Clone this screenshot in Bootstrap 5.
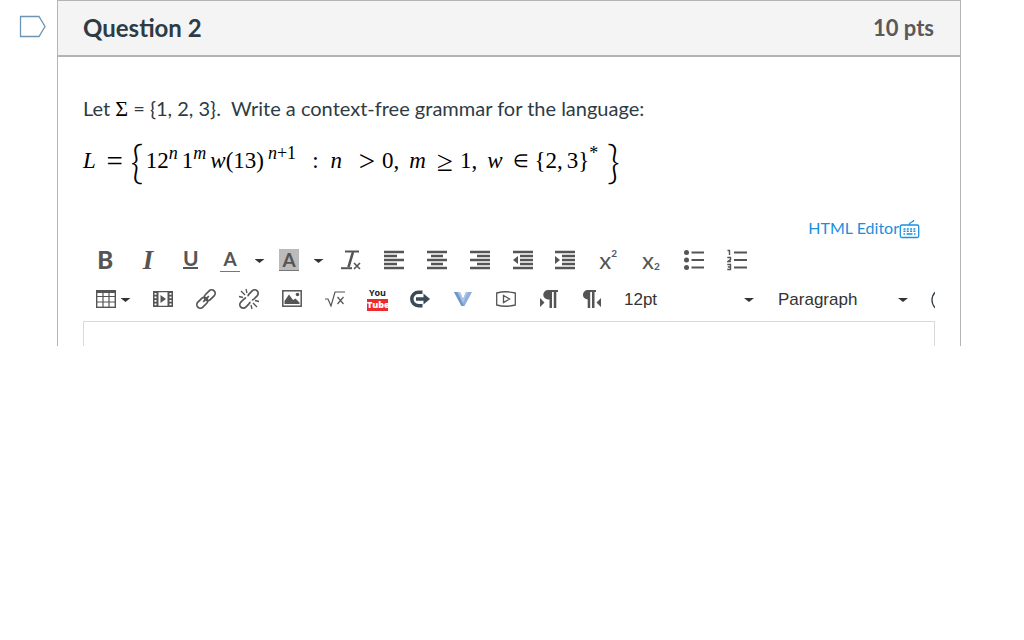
<!DOCTYPE html>
<html lang="en">
<head>
<meta charset="utf-8">
<meta name="viewport" content="width=device-width, initial-scale=1">
<title>Question 2</title>
<link href="https://cdn.jsdelivr.net/npm/bootstrap@5.3.0/dist/css/bootstrap.min.css" rel="stylesheet">
<style>
  body { font-family: Lato, sans-serif; color: #2d3b45; background: #fff; }
  .question-row { padding-right: 63px; }
  .flag-col { width: 57px; padding: 15px 0 0 19px; }
  .question { border: 1px solid #b4b4b4; border-bottom: 0; min-width: 0; }
  .question-head { background: #f4f4f4; border-bottom: 2px solid #b4b4b4; height: 56px; padding: 0 26px 0 25px; }
  .question-head h1 { font-size: 24px; line-height: 28px; font-weight: 700; }
  .points { font-size: 22px; line-height: 28px; font-weight: 700; color: #595959; }
  .question-body { padding: 35px 25px 0; }
  .prompt { font-size: 20px; line-height: 32px; }
  .sigma { font: 22px/20px "Liberation Serif", serif; color: #000; }
  .formula { font: 23px/44px "Liberation Serif", serif; color: #000; height: 44px; margin-top: 15px; white-space: nowrap; }
  .formula .pow { font-size: 18px; line-height: 28px; align-self: flex-start; }
  .formula .tall { font: 300 45px/36px Lato, sans-serif; width: 18px; text-align: center; }
  .formula .rel { font-size: 29px; width: 18px; text-align: center; }
  .formula .rel-in { font-size: 18px; }
  .sp-4 { margin-left: 4px; } .sp-6 { margin-left: 6px; } .sp-10 { margin-left: 10px; } .sp-12 { margin-left: 12px; } .sp-16 { margin-left: 16px; }
  .switch-line { margin-top: 32px; padding-right: 15px; height: 25px; }
  .switch-line a { font-size: 16px; line-height: 24px; color: #1c8fdd; }
  .switch-line svg { margin-top: 2px; }
  .tools { height: 39px; overflow: hidden; padding-left: 1px; }
  .tool-set { flex: none; }
  .tool { border: 0; background: none; padding: 0; height: 39px; color: #555; display: flex; align-items: center; justify-content: center; line-height: 24px; }
  .tool svg, .flag-col svg, .switch-line svg { display: block; }
  .w-43 { width: 43px; } .w-tail { width: 23px; } .w-ink { width: 36px; } .w-grid { width: 58px; gap: 5px; }
  .set-three { width: 128px; } .set-ten { width: 428px; } .set-eleven { width: 471px; }
  .tool-set > .tool { flex: 1 1 0; }
  .caret { width: 10px; height: 4px; background: #333; clip-path: polygon(0 0, 100% 0, 50% 100%); margin-top: 3px; }
  .t-bold { font-size: 24px; font-weight: 900; }
  .t-ital { font: italic 700 27px/24px "Liberation Serif", serif; }
  .t-under { font-size: 21px; font-weight: 700; line-height: 15px; border-bottom: 2px solid #555; padding-bottom: 2px; }
  .ink { width: 20px; height: 24px; border-bottom: 1px solid #777; font-size: 19px; font-weight: 700; line-height: 22px; }
  .ink-fill { background: #bbb; height: 22px; }
  .t-x { font: 24px/24px Lato, sans-serif; }
  .t-digit { font: 700 10px/10px Lato, sans-serif; }
  .yt { font: 700 9px/12px "Open Sans", sans-serif; color: #222; width: 21px; }
  .yt b { background: #f02a2a; color: #fff; display: block; }
  .picker { appearance: none; border: 0; width: 154px; height: 39px; flex: none; padding: 2px 30px 0 11px; font: 17px/24px "Liberation Sans", sans-serif; color: #333;
    background: url("data:image/svg+xml,%3Csvg xmlns='http://www.w3.org/2000/svg' width='10' height='4'%3E%3Cpath d='M0 0h10L5 4z' fill='%23333'/%3E%3C/svg%3E") no-repeat right 13px top 19px; }
  .editor { display: block; width: 100%; height: 25px; border: 1px solid #d9d9d9; border-bottom: 0; resize: none; margin-top: 3px; outline: 0; overflow: hidden; }
</style>
</head>
<body>
<main class="question-row d-flex">
  <div class="flag-col flex-shrink-0">
    <button type="button" class="border-0 bg-transparent p-0" aria-label="Flag question">
      <svg width="28" height="24" viewBox="0 0 28 24" fill="#fff" stroke="#6d95b3" stroke-width="1.300"><path d="M1.500 1.500H20L26 11.500L20 21.500H1.500Z"/></svg>
    </button>
  </div>
  <section class="question flex-grow-1">
    <header class="question-head d-flex justify-content-between align-items-center">
      <h1 class="m-0">Question 2</h1>
      <span class="points">10 pts</span>
    </header>
    <div class="question-body">
      <p class="prompt m-0">Let <span class="sigma">Σ</span> = {1, 2, 3}.&nbsp; Write a context-free grammar for the language:</p>
      <div class="formula d-flex align-items-center">
        <i>L</i><span class="rel sp-10">=</span><span class="tall sp-4">{</span><span>12</span><i class="pow">n</i><span class="sp-4">1</span><i class="pow">m</i><i class="sp-4">w</i><span>(13)</span><span class="pow sp-4"><i>n</i>+1</span><span class="sp-16">:</span><i class="sp-12">n</i><span class="rel sp-16">&gt;</span><span class="sp-6">0,</span><i class="sp-10">m</i><span class="rel sp-10">≥</span><span class="sp-6">1,</span><i class="sp-10">w</i><span class="rel rel-in sp-10">∈</span><span class="sp-4">{2,</span><span class="sp-4">3}</span><span class="pow">*</span><span class="tall sp-6">}</span>
      </div>
      <div class="switch-line d-flex justify-content-end align-items-center">
        <a href="#" class="text-decoration-none">HTML Editor</a>
        <svg width="21" height="20" viewBox="0 0 20 20" fill="none" stroke="#1c8fdd" stroke-width="1.300"><rect x=".8" y="6" width="18.400" height="12.500" rx="1.500"/><path d="M10 6V4.500L14 2V1"/><path d="M4 10h12M4 12.300h12" stroke-width="1.600" stroke-dasharray="2 1.300"/><path d="M4 15h1.500M7 15h6M14.500 15H16" stroke-width="1.600"/></svg>
      </div>
      <div class="tools d-flex" role="toolbar" aria-label="Text style">
        <div class="tool-set set-three d-flex">
          <button type="button" class="tool t-bold" aria-label="Bold">B</button>
          <button type="button" class="tool t-ital" aria-label="Italic">I</button>
          <button type="button" class="tool" aria-label="Underline"><span class="t-under">U</span></button>
        </div>
        <button type="button" class="tool w-ink" aria-label="Text color"><span class="ink">A</span></button>
        <button type="button" class="tool w-tail" aria-label="Choose text color"><span class="caret"></span></button>
        <button type="button" class="tool w-ink" aria-label="Background color"><span class="ink ink-fill">A</span></button>
        <button type="button" class="tool w-tail" aria-label="Choose background color"><span class="caret"></span></button>
        <div class="tool-set set-ten d-flex">
          <button type="button" class="tool" aria-label="Clear formatting"><svg width="20" height="20" viewBox="0 0 20 20" stroke="currentColor" fill="none"><path d="M4 1.500h14" stroke-width="2"/><path d="M12 2L7.500 17" stroke-width="2.600"/><path d="M0 18.200h11" stroke-width="2"/><path d="M13 13l6 6M19 13l-6 6" stroke-width="1.600"/></svg></button>
          <button type="button" class="tool" aria-label="Align left"><svg width="20" height="20" viewBox="0 0 20 20" stroke="currentColor" stroke-width="2.300"><path d="M0 2h20M0 6h13M0 10h20M0 14h13M0 18h20"/></svg></button>
          <button type="button" class="tool" aria-label="Align center"><svg width="20" height="20" viewBox="0 0 20 20" stroke="currentColor" stroke-width="2.300"><path d="M0 2h20M4 6h12M0 10h20M4 14h12M0 18h20"/></svg></button>
          <button type="button" class="tool" aria-label="Align right"><svg width="20" height="20" viewBox="0 0 20 20" stroke="currentColor" stroke-width="2.300"><path d="M0 2h20M7 6h13M0 10h20M7 14h13M0 18h20"/></svg></button>
          <button type="button" class="tool" aria-label="Decrease indent"><svg width="20" height="20" viewBox="0 0 20 20" stroke="currentColor" stroke-width="2.300"><path d="M0 2h20M7 6h13M7 10h13M7 14h13M0 18h20"/><path d="M0 10l5-4v8z" fill="currentColor" stroke="none"/></svg></button>
          <button type="button" class="tool" aria-label="Increase indent"><svg width="20" height="20" viewBox="0 0 20 20" stroke="currentColor" stroke-width="2.300"><path d="M0 2h20M7 6h13M7 10h13M7 14h13M0 18h20"/><path d="M5 10L0 6v8z" fill="currentColor" stroke="none"/></svg></button>
          <button type="button" class="tool" aria-label="Superscript"><span class="t-x">x</span><span class="t-digit align-self-start mt-2">2</span></button>
          <button type="button" class="tool" aria-label="Subscript"><span class="t-x">x</span><span class="t-digit align-self-end mb-2">2</span></button>
          <button type="button" class="tool" aria-label="Bulleted list"><svg width="20" height="20" viewBox="0 0 20 20" stroke="currentColor" stroke-width="2"><path d="M7.500 2.500H20M7.500 10H20M7.500 17.500H20"/><g fill="currentColor" stroke="none"><circle cx="2.500" cy="2.500" r="2.500"/><circle cx="2.500" cy="10" r="2.500"/><circle cx="2.500" cy="17.500" r="2.500"/></g></svg></button>
          <button type="button" class="tool" aria-label="Numbered list"><svg width="20" height="22" viewBox="0 0 20 22" stroke="currentColor" stroke-width="2"><path d="M7 3.500H20M7 11H20M7 18.500H20"/><g fill="none" stroke-width="1.400"><path d="M.5 1.500H2.500V6M.3 8.500H3.500V10.700L.8 12.500H4M.3 15.500H3.500V20.500H.3M.8 18h2.700"/></g></svg></button>
        </div>
      </div>
      <div class="tools d-flex" role="toolbar" aria-label="Insert">
        <button type="button" class="tool w-grid flex-shrink-0" aria-label="Table"><svg width="20" height="18" viewBox="0 0 20 18" fill="none" stroke="currentColor"><rect x=".7" y=".7" width="18.600" height="16.600" stroke-width="1.400"/><path d="M0 2h20" stroke-width="2"/><path d="M1 6.500h18M1 12h18M7 1v16M13 1v16" stroke-width="1.200"/></svg><span class="caret"></span></button>
        <div class="tool-set set-eleven d-flex">
          <button type="button" class="tool" aria-label="Media"><svg width="20" height="16" viewBox="0 0 20 16" fill="currentColor"><path fill-rule="evenodd" d="M0 0h20v16H0zM5.500 1.300v13.400h9V1.300zM1.500 2v1.800h2V2zM1.500 5.500v1.800h2V5.500zM1.500 9v1.800h2V9zM1.500 12.400v1.800h2v-1.800zM16.500 2v1.800h2V2zM16.500 5.500v1.800h2V5.500zM16.500 9v1.800h2V9zM16.500 12.400v1.800h2v-1.800z"/><path d="M7.500 4l5.500 4-5.500 4z"/></svg></button>
          <button type="button" class="tool" aria-label="Link"><svg width="20" height="20" viewBox="0 0 20 20" fill="none" stroke="currentColor" stroke-width="1.700"><g transform="rotate(-45 10 10)"><rect x="-1.500" y="6.500" width="12.500" height="7" rx="3.500"/><rect x="9" y="6.500" width="12.500" height="7" rx="3.500"/><path d="M6 10h8"/></g></svg></button>
          <button type="button" class="tool" aria-label="Remove link"><svg width="22" height="22" viewBox="0 0 22 22" fill="none" stroke="currentColor" stroke-width="1.700"><g transform="rotate(-45 11 11)"><path d="M9.500 8.500Q9 7.500 7.500 7.500H3A3.500 3.500 0 0 0 3 14.500H7.500Q9 14.500 9.500 13.500M12.500 8.500Q13 7.500 14.500 7.500H19A3.500 3.500 0 0 1 19 14.500H14.500Q13 14.500 12.500 13.500"/></g><path d="M3 3l4 4M8 1l1 4M1 8.500l4 1M15 15l4 4M13 17l1 4M17 12.500l4 1" stroke-width="1.300"/></svg></button>
          <button type="button" class="tool" aria-label="Image"><svg width="20" height="17" viewBox="0 0 20 17" fill="none" stroke="currentColor" stroke-width="1.500"><rect x=".8" y=".8" width="18.400" height="15.400"/><path d="M2.500 14V11L7 4.500L11 10L13.500 8.500L17.500 12.500V14Z" fill="currentColor" stroke="none"/><circle cx="15.500" cy="4.500" r="1.800" fill="currentColor" stroke="none"/></svg></button>
          <button type="button" class="tool" aria-label="Math equation"><svg width="20" height="16" viewBox="0 0 20 16" fill="none" stroke="currentColor" stroke-width="1.200"><path d="M0 8h3L6 15L10 1H20M12.500 6l6 7M18.500 6l-6 7"/></svg></button>
          <button type="button" class="tool" aria-label="YouTube"><span class="yt">You<b>Tube</b></span></button>
          <button type="button" class="tool" aria-label="External tool"><svg width="20" height="18" viewBox="0 0 20 18" fill="none" stroke="#394b58"><path d="M12.500 2.300H8.500A6.500 6.500 0 0 0 8.500 15.700H12.500" stroke-width="3.500"/><path d="M6 9H15" stroke-width="3.500"/><path d="M13.500 3.500L20 9L13.500 14.500Z" fill="#394b58" stroke="none"/></svg></button>
          <button type="button" class="tool" aria-label="Vericite"><svg width="18" height="16" viewBox="0 0 18 16"><path d="M0 1H6L9 8L12 1H18L10.500 15H7.500Z" fill="#8fb0dc"/><path d="M0 1H3L10 15H7.500Z" fill="#7096c8"/><path d="M4 1h2l3 7 3-7h2L9 12z" fill="#a9c5e8"/></svg></button>
          <button type="button" class="tool" aria-label="Video"><svg width="20" height="16" viewBox="0 0 20 16" fill="none" stroke="currentColor" stroke-width="1.300"><path d="M.7 2Q10-.5 19.300 2V14Q10 16.500 .7 14ZM7.500 4.500L13.500 8L7.500 11.500Z"/></svg></button>
          <button type="button" class="tool" aria-label="Left to right"><svg width="18" height="18" viewBox="0 0 18 18" fill="currentColor"><path d="M8 0H18V2H16.300V18H13.800V2H12V18H9.500V9.500H8A4.700 4.700 0 0 1 8 0ZM0 8L4.500 12.500L0 17Z"/></svg></button>
          <button type="button" class="tool" aria-label="Right to left"><svg width="18" height="18" viewBox="0 0 18 18" fill="currentColor"><path d="M4.700 0H13V2H11.500V18H9V2H7.200V18H4.700V9.500A4.700 4.700 0 0 1 4.700 0ZM18 8L13.500 12.500L18 17Z"/></svg></button>
        </div>
        <select class="picker" aria-label="Font size"><option>12pt</option></select>
        <select class="picker" aria-label="Block format"><option>Paragraph</option></select>
        <button type="button" class="tool w-43 flex-shrink-0" aria-label="Check accessibility"><svg width="24" height="24" viewBox="0 0 24 24" fill="none" stroke="#2d3b45" stroke-width="1.300"><circle cx="12" cy="13" r="11"/></svg></button>
      </div>
      <textarea class="editor" aria-label="Answer"></textarea>
    </div>
  </section>
</main>
<script src="https://cdn.jsdelivr.net/npm/bootstrap@5.3.0/dist/js/bootstrap.bundle.min.js"></script>
</body>
</html>
